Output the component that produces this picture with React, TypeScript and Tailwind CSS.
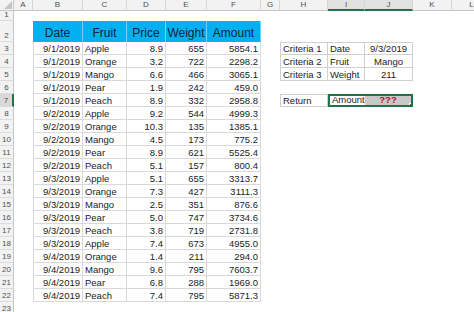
import { Fragment } from "react";

const COLS = ["A", "B", "C", "D", "E", "F", "G", "H", "I", "J", "K", "L"];

const DATA: Array<[string, string, string, string, string]> = [
  ["9/1/2019", "Apple", "8.9", "655", "5854.1"],
  ["9/1/2019", "Orange", "3.2", "722", "2298.2"],
  ["9/1/2019", "Mango", "6.6", "466", "3065.1"],
  ["9/1/2019", "Pear", "1.9", "242", "459.0"],
  ["9/1/2019", "Peach", "8.9", "332", "2958.8"],
  ["9/2/2019", "Apple", "9.2", "544", "4999.3"],
  ["9/2/2019", "Orange", "10.3", "135", "1385.1"],
  ["9/2/2019", "Mango", "4.5", "173", "775.2"],
  ["9/2/2019", "Pear", "8.9", "621", "5525.4"],
  ["9/2/2019", "Peach", "5.1", "157", "800.4"],
  ["9/3/2019", "Apple", "5.1", "655", "3313.7"],
  ["9/3/2019", "Orange", "7.3", "427", "3111.3"],
  ["9/3/2019", "Mango", "2.5", "351", "876.6"],
  ["9/3/2019", "Pear", "5.0", "747", "3734.6"],
  ["9/3/2019", "Peach", "3.8", "719", "2731.8"],
  ["9/3/2019", "Apple", "7.4", "673", "4955.0"],
  ["9/4/2019", "Orange", "1.4", "211", "294.0"],
  ["9/4/2019", "Mango", "9.6", "795", "7603.7"],
  ["9/4/2019", "Pear", "6.8", "288", "1969.0"],
  ["9/4/2019", "Peach", "7.4", "795", "5871.3"],
];

const HEADERS = ["Date", "Fruit", "Price", "Weight", "Amount"];

const CRITERIA = [
  ["Criteria 1", "Date", "9/3/2019"],
  ["Criteria 2", "Fruit", "Mango"],
  ["Criteria 3", "Weight", "211"],
];

const ROWS = Array.from({ length: 23 }, (_, i) => i + 1);

const base = "flex items-end pb-[1px] leading-none overflow-hidden whitespace-nowrap";

function Cell({ row, col }: { row: number; col: number }) {
  // blue header of the data table
  if (row === 2 && col >= 1 && col <= 5) {
    return (
      <div className={`${base} justify-center pb-[3px] bg-[#00b0f0] border-r border-[#6fd3f7] text-[12px] text-[#0e2536]`}>
        {HEADERS[col - 1]}
      </div>
    );
  }

  // data rows
  if (row >= 3 && row <= 22 && col >= 1 && col <= 5) {
    const value = DATA[row - 3][col - 1];
    const align = col === 2 ? "justify-start pl-[2px]" : "justify-end pr-[2px]";
    return (
      <div className={`${base} ${align} border-r border-b border-[#d9d9d9] ${col === 1 ? "border-l" : ""}`}>
        {value}
      </div>
    );
  }

  // criteria table
  if (row >= 3 && row <= 5 && col >= 7 && col <= 9) {
    const value = CRITERIA[row - 3][col - 7];
    const align = col === 9 ? "justify-center" : "justify-start pl-[2px]";
    return (
      <div
        className={`${base} ${align} border-r border-b border-[#d0d0d0] ${col === 7 ? "border-l" : ""} ${row === 3 ? "border-t" : ""}`}
      >
        {value}
      </div>
    );
  }

  // return row
  if (row === 7 && col === 7) {
    return <div className={`${base} justify-start pl-[2px] border border-[#d0d0d0]`}>Return</div>;
  }
  if (row === 7 && col === 8) {
    return (
      <div className={`${base} justify-start pl-[2px] border-y-2 border-l-2 border-[#217346]`}>Amount</div>
    );
  }
  if (row === 7 && col === 9) {
    return (
      <div className={`${base} relative justify-center border-y-2 border-r-2 border-[#217346] bg-[#c8c8c8] font-bold text-[#b0102a]`}>
        ???
        <span className="absolute -bottom-[4px] -right-[4px] w-[6px] h-[6px] bg-[#217346] border border-white" />
      </div>
    );
  }

  return <div />;
}

export default function App() {
  return (
    <div className="w-[474px] h-[312px] overflow-hidden bg-white font-['Liberation_Sans',Arial,sans-serif] text-[9.5px] text-[#222]">
      <div className="grid grid-cols-[14px_19px_50px_44px_39px_41px_54px_19px_48px_37px_48px_39px_40px] grid-rows-[11px_10px_21px_repeat(21,13px)]">
        {/* corner */}
        <div className="relative bg-[#f2f2f2] border-r border-b border-[#c6c6c6]">
          <svg className="absolute right-[1px] bottom-[1px]" width="8" height="8" viewBox="0 0 8 8">
            <path d="M8 0 L8 8 L0 8 Z" fill="#c4c4c4" />
          </svg>
        </div>
        {COLS.map((c, i) => {
          const sel = i === 8 || i === 9;
          return (
            <div
              key={c}
              className={`flex items-center justify-center text-[8px] text-[#505050] border-r border-[#d6d6d6] ${
                sel ? "bg-[#e1e1e1] border-b-2 border-b-[#217346]" : "bg-[#f2f2f2] border-b border-b-[#c6c6c6]"
              }`}
            >
              {c}
            </div>
          );
        })}

        {ROWS.map((r) => (
          <Fragment key={r}>
            <div
              className={`flex items-end justify-center pb-[1px] text-[8px] leading-none text-[#505050] border-b border-[#dcdcdc] ${
                r === 7 ? "bg-[#d9d9d9] border-r-2 border-r-[#217346]" : "bg-[#f2f2f2] border-r border-r-[#c6c6c6]"
              }`}
            >
              {r}
            </div>
            {COLS.map((_, ci) => (
              <Cell key={ci} row={r} col={ci} />
            ))}
          </Fragment>
        ))}
      </div>
    </div>
  );
}
